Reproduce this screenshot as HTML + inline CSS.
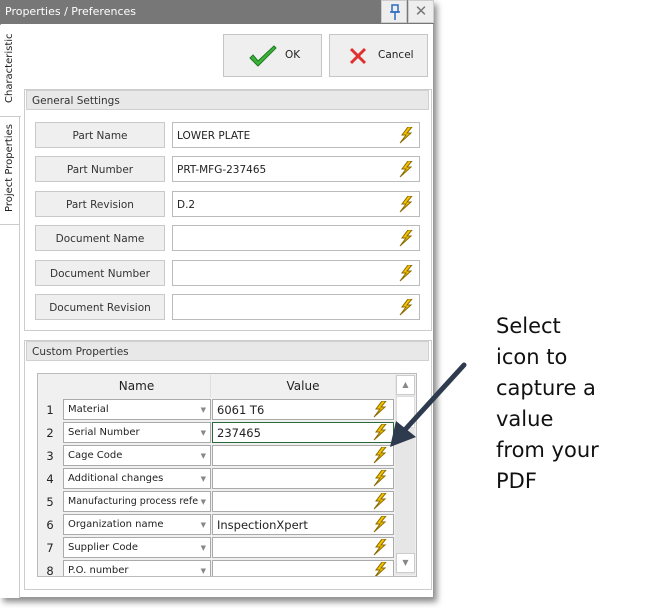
<!DOCTYPE html>
<html><head><meta charset="utf-8"><style>
*{box-sizing:border-box;margin:0;padding:0}
body{width:652px;height:609px;background:#fff;position:relative;overflow:hidden;font-family:"DejaVu Sans","Liberation Sans",sans-serif;font-size:10px;color:#222}
.a{position:absolute}
.dlg{left:0;top:0;width:434px;height:598px;background:#fff;box-shadow:3px 4px 6px rgba(0,0,0,.45);border:1px solid #999}
.title{left:0;top:0;width:434px;height:24px;background:#777;color:#fff;font-size:11px;line-height:24px;padding-left:5px}
.tb{top:0;width:26px;height:23px;background:#eee;border:1px solid #ccc}
.lab{width:130px;height:26px;background:#efefef;border:1px solid #c9c9c9;text-align:center;line-height:26px;font-size:10.5px;color:#333}
.inp{width:248px;height:26px;background:#fff;border:1px solid #bbb;line-height:26px;padding-left:4px;font-size:10.5px}
.bolt{position:absolute;right:6px;top:4px}
.grp{border:1px solid #ccc}
.gh{background:#e8e8e8;border:1px solid #d0d0d0;height:20px;line-height:20px;padding-left:5px;font-size:10.5px;color:#333}
.btn{width:99px;height:43px;background:#efefef;border:1px solid #c5c5c5;font-size:10.5px;line-height:41px}
.cell{position:absolute;background:#fff;border:1px solid #aaa;height:21px;line-height:20px;font-size:10px;padding-left:4px}
.rn{position:absolute;left:38px;width:24px;text-align:center;font-size:11.5px;line-height:22px}
.dd{position:absolute;right:4px;top:0;color:#888;font-size:7px}
.note{left:496px;font-family:"DejaVu Sans",sans-serif;font-size:21px;color:#111;line-height:31px}
</style></head><body>
<svg width="0" height="0" style="position:absolute"><defs><g id="b"><polygon points="9,0 3,8 7,8 1,16 12,6 8,6 13,0" fill="#f6c400" stroke="#8a6a00" stroke-width="1"/></g></defs></svg>
<div class="a dlg"></div>
<div class="a title">Properties / Preferences</div>
<div class="a tb" style="left:381px"><svg class="a" style="left:7px;top:3px" width="12" height="17"><rect x="3" y="1" width="6" height="7" fill="none" stroke="#2a6bc0" stroke-width="1.5"/><path d="M1 8 H11 M6 8 V16" stroke="#2a6bc0" stroke-width="1.5"/></svg></div>
<div class="a tb" style="left:408px;text-align:center;color:#777;font-size:15px;font-weight:bold;line-height:21px">✕</div>
<!-- side tabs -->
<div class="a" style="left:0;top:25px;width:20px;height:573px;background:#fff;border-right:1px solid #ccc"></div>
<div class="a" style="left:0;top:25px;width:21px;height:92px;background:#fff;border-bottom:1px solid #ccc"></div>
<div class="a" style="left:0;top:117px;width:20px;height:108px;border-bottom:1px solid #ccc"></div>
<div class="a" style="left:4px;top:103px;transform:rotate(-90deg);transform-origin:0 0;font-size:10px;white-space:nowrap">Characteristic</div>
<div class="a" style="left:4px;top:212px;transform:rotate(-90deg);transform-origin:0 0;font-size:10px;white-space:nowrap">Project Properties</div>
<!-- buttons -->
<div class="a btn" style="left:223px;top:34px"><svg class="a" style="left:24px;top:10px" width="30" height="24"><path d="M2 13 L10 21 L28 3 L26 1 L10 16 L5 10 Z" fill="#3cb43c" stroke="#1d7a1d"/></svg><span class="a" style="left:61px">OK</span></div>
<div class="a btn" style="left:329px;top:34px"><svg class="a" style="left:19px;top:12px" width="18" height="18"><path d="M2 2 L16 16 M16 2 L2 16" stroke="#e03030" stroke-width="3"/></svg><span class="a" style="left:48px">Cancel</span></div>
<!-- general -->
<div class="a grp" style="left:24px;top:89px;width:408px;height:242px"></div>
<div class="a gh" style="left:26px;top:90px;width:403px">General Settings</div>
<div class="a lab" style="left:35px;top:122px">Part Name</div><div class="a inp" style="left:172px;top:122px">LOWER PLATE<svg class="bolt" width="14" height="17"><use href="#b"/></svg></div>
<div class="a lab" style="left:35px;top:156px">Part Number</div><div class="a inp" style="left:172px;top:156px">PRT-MFG-237465<svg class="bolt" width="14" height="17"><use href="#b"/></svg></div>
<div class="a lab" style="left:35px;top:191px">Part Revision</div><div class="a inp" style="left:172px;top:191px">D.2<svg class="bolt" width="14" height="17"><use href="#b"/></svg></div>
<div class="a lab" style="left:35px;top:225px">Document Name</div><div class="a inp" style="left:172px;top:225px"><svg class="bolt" width="14" height="17"><use href="#b"/></svg></div>
<div class="a lab" style="left:35px;top:260px">Document Number</div><div class="a inp" style="left:172px;top:260px"><svg class="bolt" width="14" height="17"><use href="#b"/></svg></div>
<div class="a lab" style="left:35px;top:294px">Document Revision</div><div class="a inp" style="left:172px;top:294px"><svg class="bolt" width="14" height="17"><use href="#b"/></svg></div>
<!-- custom -->
<div class="a grp" style="left:24px;top:340px;width:408px;height:250px"></div>
<div class="a gh" style="left:26px;top:341px;width:403px">Custom Properties</div>
<div class="a" style="left:37px;top:373px;width:380px;height:204px;background:#f0f0f0;border:1px solid #bbb;overflow:hidden">
</div>
<div class="a" style="left:63px;top:375px;width:148px;height:22px;text-align:center;font-size:12px;line-height:22px;border-right:1px solid #ddd">Name</div>
<div class="a" style="left:212px;top:375px;width:182px;height:22px;text-align:center;font-size:12px;line-height:22px">Value</div>
<div class="a" style="left:395px;top:375px;width:20px;height:200px;background:#e6e6e6"></div>
<div class="a" style="left:396px;top:375px;width:19px;height:20px;background:#fff;border:1px solid #ccc;text-align:center;color:#888;font-size:8px;line-height:18px">▲</div>
<div class="a" style="left:396px;top:396px;width:19px;height:32px;background:#fff;border:1px solid #ddd"></div>
<div class="a" style="left:396px;top:553px;width:19px;height:20px;background:#fff;border:1px solid #ccc;text-align:center;color:#888;font-size:8px;line-height:18px">▼</div>
<div class="a" style="left:38px;top:399px;width:356px;height:177px;overflow:hidden">
<div style="position:relative;left:-38px;top:-399px">
<div class="rn" style="top:399px">1</div><div class="cell" style="left:63px;top:399px;width:148px">Material<span class="dd">▼</span></div><div class="cell" style="left:212px;top:399px;width:182px;font-size:11.5px">6061 T6<svg class="bolt" style="top:1px" width="14" height="17"><use href="#b"/></svg></div>
<div class="rn" style="top:422px">2</div><div class="cell" style="left:63px;top:422px;width:148px">Serial Number<span class="dd">▼</span></div><div class="cell" style="left:212px;top:422px;width:182px;font-size:11.5px;border-color:#2a6a3a">237465<svg class="bolt" style="top:1px" width="14" height="17"><use href="#b"/></svg></div>
<div class="rn" style="top:445px">3</div><div class="cell" style="left:63px;top:445px;width:148px">Cage Code<span class="dd">▼</span></div><div class="cell" style="left:212px;top:445px;width:182px"><svg class="bolt" style="top:1px" width="14" height="17"><use href="#b"/></svg></div>
<div class="rn" style="top:468px">4</div><div class="cell" style="left:63px;top:468px;width:148px">Additional changes<span class="dd">▼</span></div><div class="cell" style="left:212px;top:468px;width:182px"><svg class="bolt" style="top:1px" width="14" height="17"><use href="#b"/></svg></div>
<div class="rn" style="top:491px">5</div><div class="cell" style="left:63px;top:491px;width:148px;white-space:nowrap;overflow:hidden;font-size:9.5px">Manufacturing process refer<span class="dd" style="background:#fff;padding-left:2px">▼</span></div><div class="cell" style="left:212px;top:491px;width:182px"><svg class="bolt" style="top:1px" width="14" height="17"><use href="#b"/></svg></div>
<div class="rn" style="top:514px">6</div><div class="cell" style="left:63px;top:514px;width:148px">Organization name<span class="dd">▼</span></div><div class="cell" style="left:212px;top:514px;width:182px;font-size:11.5px">InspectionXpert<svg class="bolt" style="top:1px" width="14" height="17"><use href="#b"/></svg></div>
<div class="rn" style="top:537px">7</div><div class="cell" style="left:63px;top:537px;width:148px">Supplier Code<span class="dd">▼</span></div><div class="cell" style="left:212px;top:537px;width:182px"><svg class="bolt" style="top:1px" width="14" height="17"><use href="#b"/></svg></div>
<div class="rn" style="top:560px">8</div><div class="cell" style="left:63px;top:560px;width:148px">P.O. number<span class="dd">▼</span></div><div class="cell" style="left:212px;top:560px;width:182px"><svg class="bolt" style="top:1px" width="14" height="17"><use href="#b"/></svg></div>
</div></div>
<!-- arrow -->
<svg class="a" style="left:380px;top:355px" width="100" height="100"><line x1="84" y1="10" x2="22" y2="78" stroke="#2e3a4e" stroke-width="5" stroke-linecap="round"/><polygon points="10,92 16,66 36,82" fill="#2e3a4e"/></svg>
<div class="a note" style="top:311px">Select<br>icon to<br>capture a<br>value<br>from your<br>PDF</div>
</body></html>
